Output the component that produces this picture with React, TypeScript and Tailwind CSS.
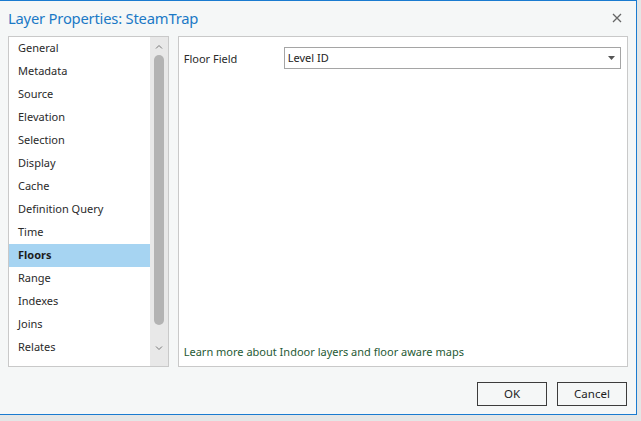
import React from 'react';

const items = [
  'General',
  'Metadata',
  'Source',
  'Elevation',
  'Selection',
  'Display',
  'Cache',
  'Definition Query',
  'Time',
  'Floors',
  'Range',
  'Indexes',
  'Joins',
  'Relates',
  'Page Query',
];

const font = { fontFamily: '"Noto Sans", "Open Sans", sans-serif' };

export default function App() {
  const selected = 'Floors';

  return (
    <div className="w-[641px] h-[421px] bg-[#e4e6e6] overflow-hidden" style={font}>
      <div className="w-[637px] h-[415px] bg-[#f5f7f7] border-t border-r border-b border-[#1a7bd0] flex flex-col">
        {/* Title bar */}
        <div className="h-[35px] flex items-center justify-between pl-[8px] pr-[14px]">
          <span className="text-[14.75px] text-[#1b79c6] tracking-[-0.2px]">Layer Properties: SteamTrap</span>
          <svg width="10" height="10" viewBox="0 0 10 10" className="mb-[2px]">
            <path d="M1 1 L9 9 M9 1 L1 9" stroke="#666" strokeWidth="1.3" />
          </svg>
        </div>

        {/* Body */}
        <div className="flex gap-[9px] pl-[8px] pr-[8px]">
          {/* Page list */}
          <div className="w-[161px] h-[331px] bg-white border border-[#c9c9c9] flex overflow-hidden">
            <div className="flex-1 flex flex-col overflow-hidden">
              {items.map((item) => (
                <div
                  key={item}
                  className={`h-[23px] shrink-0 flex items-center pl-[9px] pb-[1px] text-[11px] ${
                    item === selected ? 'bg-[#a6d4f2] font-bold text-[#1d1d1d]' : 'text-[#2a2a2a]'
                  }`}
                >
                  {item}
                </div>
              ))}
            </div>
            <div className="w-[18px] bg-[#e8e8e8] flex flex-col items-center">
              <svg width="8" height="6" viewBox="0 0 8 6" className="mt-[7px]">
                <path d="M1 4.5 L4 1.5 L7 4.5" stroke="#777" strokeWidth="1" fill="none" />
              </svg>
              <div className="w-[10px] h-[270px] mt-[5px] rounded-full bg-[#b3b3b3]" />
              <svg width="8" height="6" viewBox="0 0 8 6" className="mt-[20px]">
                <path d="M1 1.5 L4 4.5 L7 1.5" stroke="#777" strokeWidth="1" fill="none" />
              </svg>
            </div>
          </div>

          {/* Page content */}
          <div className="w-[451px] h-[331px] bg-white border border-[#c9c9c9] flex flex-col justify-between pl-[5px] pr-[6px] pt-[10px] pb-[6px]">
            <div className="flex items-center">
              <span className="w-[100px] text-[11px] text-[#2a2a2a] mt-[2px]">Floor Field</span>
              <div className="w-[337px] h-[22px] border border-[#a5a5a5] flex items-center justify-between pl-[3px] pr-[5px]">
                <span className="text-[11px] text-[#1d1d1d]">Level ID</span>
                <svg width="7" height="4" viewBox="0 0 7 4">
                  <path d="M0 0 H7 L3.5 4 Z" fill="#555" />
                </svg>
              </div>
            </div>
            <span className="text-[11px] text-[#1f5a35]">Learn more about Indoor layers and floor aware maps</span>
          </div>
        </div>

        {/* Buttons */}
        <div className="flex justify-end gap-[10px] pr-[9px] mt-[15px]">
          <button className="w-[70px] h-[24px] border border-[#3c3c3c] bg-[#f5f7f7] text-[11.5px] text-[#1d1d1d]">OK</button>
          <button className="w-[70px] h-[24px] border border-[#3c3c3c] bg-[#f5f7f7] text-[11.5px] text-[#1d1d1d]">Cancel</button>
        </div>
      </div>
    </div>
  );
}
